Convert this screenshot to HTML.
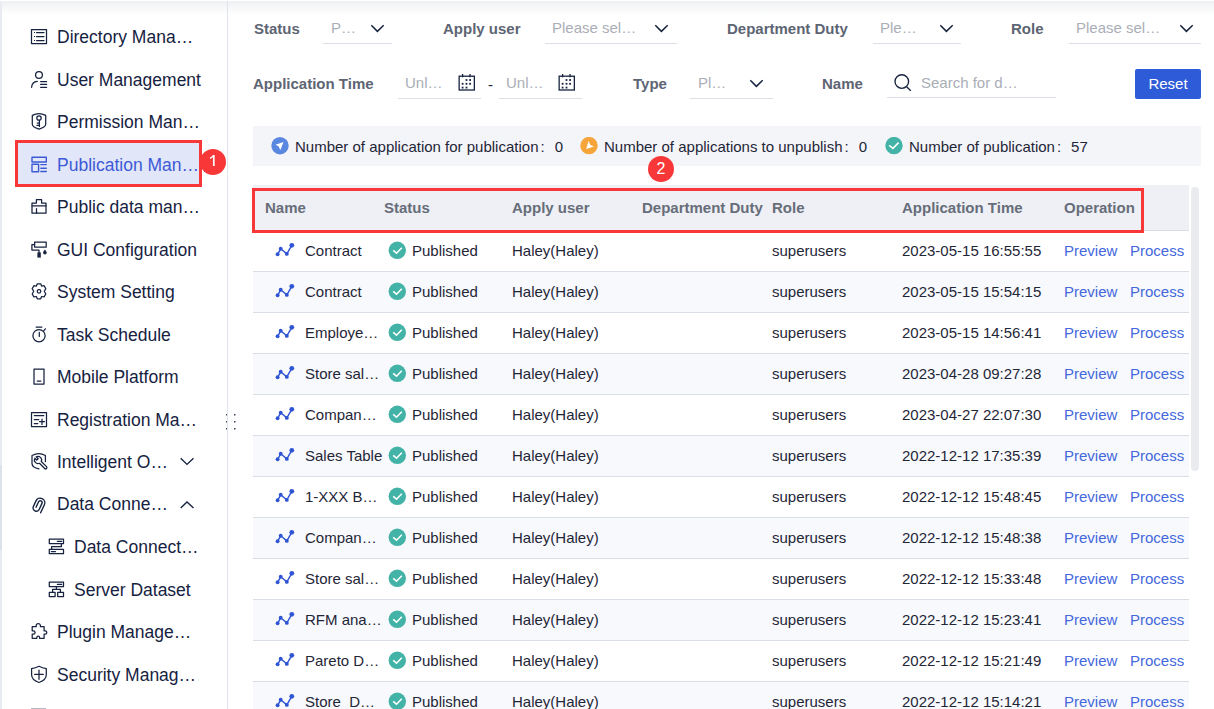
<!DOCTYPE html>
<html><head><meta charset="utf-8">
<style>
*{box-sizing:border-box;margin:0;padding:0}
html,body{width:1214px;height:709px;overflow:hidden;background:#fff;font-family:"Liberation Sans",sans-serif}
.abs{position:absolute}
#shadow{position:absolute;left:0;top:1px;width:1214px;height:14px;background:linear-gradient(#eef0f3,rgba(255,255,255,0));z-index:5}
#lb{position:absolute;left:0;top:1px;width:2px;height:708px;background:#e8ebf2;z-index:6}#lb2{position:absolute;left:0;top:465px;width:2px;height:85px;background:#dde1ea;z-index:7}
#side{position:absolute;left:0;top:0;width:228px;height:709px;background:#fff}#divl{position:absolute;left:227px;top:1px;width:1px;height:708px;background:#e1e4ea;z-index:6}
.si{position:absolute;left:57px;font-size:17.5px;line-height:20px;color:#16223f;white-space:nowrap}
.lbl{position:absolute;font-size:15px;font-weight:700;color:#5d6573;line-height:20px;white-space:nowrap}
.ph{position:absolute;font-size:15px;color:#a9aeb7;line-height:20px;white-space:nowrap}
.ul{position:absolute;height:1px;background:#dcdfe5}
.td{position:absolute;font-size:15px;line-height:20px;color:#1f2637;white-space:nowrap}
.th{position:absolute;font-size:15px;font-weight:700;line-height:20px;color:#676d79;white-space:nowrap}
.lk{color:#4468dc}
.row{position:absolute;left:253px;width:936px;height:41px;border-bottom:1px solid #dadee5}
</style></head><body>
<div id="shadow"></div><div id="divl"></div><div id="lb"></div><div id="lb2"></div>
<div id="side">
 <div class="abs" style="left:15px;top:140px;width:187px;height:47px;background:#e1e6f8;border:3px solid #f83838"></div>
 <div class="si" style="top:27px;left:57px">Directory Mana…</div>
 <div class="si" style="top:70px;left:57px">User Management</div>
 <div class="si" style="top:112px;left:57px">Permission Man…</div>
 <div class="si" style="top:155px;left:57px ;color:#3d5ad6">Publication Man…</div>
 <div class="si" style="top:197px;left:57px">Public data man…</div>
 <div class="si" style="top:240px;left:57px">GUI Configuration</div>
 <div class="si" style="top:282px;left:57px">System Setting</div>
 <div class="si" style="top:325px;left:57px">Task Schedule</div>
 <div class="si" style="top:367px;left:57px">Mobile Platform</div>
 <div class="si" style="top:410px;left:57px">Registration Ma…</div>
 <div class="si" style="top:452px;left:57px">Intelligent O…</div>
 <div class="si" style="top:494px;left:57px">Data Conne…</div>
 <div class="si" style="top:537px;left:74px">Data Connect…</div>
 <div class="si" style="top:580px;left:74px">Server Dataset</div>
 <div class="si" style="top:622px;left:57px">Plugin Manage…</div>
 <div class="si" style="top:665px;left:57px">Security Manag…</div>
 <svg class="abs" style="left:27px;top:25px" width="24" height="24" viewBox="0 0 24 24"><g fill="none" stroke="#16223f" stroke-width="1.25" stroke-linecap="round" stroke-linejoin="round" stroke-linecap="butt"><rect x="4.5" y="4.5" width="15" height="14"/><path d="M9.5 7.5H17M9.5 11.5H17M9.5 15.5H17"/></g><g fill="#16223f"><rect x="7" y="7" width="1" height="1"/><rect x="7" y="11" width="1" height="1"/><rect x="7" y="15" width="1" height="1"/></g></svg>
 <svg class="abs" style="left:27px;top:67px" width="24" height="24" viewBox="0 0 24 24"><g fill="none" stroke="#16223f" stroke-width="1.25" stroke-linecap="round" stroke-linejoin="round"><circle cx="12" cy="8" r="3.4"/><path d="M4.6 20.3C4.9 16.9 7.3 14.6 10.3 14.4"/><path d="M13.6 14.6H19.6M13.6 17.4H19.6M13.6 20.3H19.6"/></g></svg>
 <svg class="abs" style="left:27px;top:109px" width="24" height="24" viewBox="0 0 24 24"><g fill="none" stroke="#16223f" stroke-width="1.25" stroke-linecap="round" stroke-linejoin="round"><path d="M5.3 6.4C7.5 5.3 9.6 4.6 12 4.6S16.5 5.3 18.7 6.4V15.3C18.7 17.5 15 19.3 12 20.2C9 19.3 5.3 17.5 5.3 15.3Z"/><circle cx="12" cy="9" r="2.2"/><path d="M12.4 11.3V17.4M10.3 14.2H12.4M10 16.4H12.4"/></g></svg>
 <svg class="abs" style="left:27px;top:152px" width="24" height="24" viewBox="0 0 24 24"><g fill="none" stroke="#3d5ad6" stroke-width="1.4" stroke-linecap="round" stroke-linejoin="round"><rect x="5" y="5.2" width="14.3" height="4.8"/><rect x="5" y="12.3" width="6.6" height="7.4"/><path d="M13.8 12.6H19.3M13.8 16.3H19.3M13.8 19.5H19.3"/></g></svg>
 <svg class="abs" style="left:27px;top:195px" width="24" height="24" viewBox="0 0 24 24"><g fill="none" stroke="#16223f" stroke-width="1.25" stroke-linecap="round" stroke-linejoin="round"><path d="M5 8H9.4V4.6H14.6V8H19V18.2H5Z"/><path d="M5 10.8H19M9.5 13.5V18.2"/></g></svg>
 <svg class="abs" style="left:27px;top:237px" width="24" height="24" viewBox="0 0 24 24"><g fill="none" stroke="#16223f" stroke-width="1.25" stroke-linecap="round" stroke-linejoin="round"><rect x="7.6" y="5.1" width="11.6" height="5"/><path d="M7.6 7.5H4.9V13H12V15.6"/></g><rect x="10.4" y="15.4" width="3.4" height="5.2" fill="#16223f"/><path d="M17.9 12.6C18.9 14 19.7 14.9 19.7 15.8A1.8 1.8 0 0 1 16.1 15.8C16.1 14.9 16.9 14 17.9 12.6Z" fill="#16223f"/></svg>
 <svg class="abs" style="left:27px;top:280px" width="24" height="24" viewBox="0 0 24 24"><g fill="none" stroke="#16223f" stroke-width="1.25" stroke-linecap="round" stroke-linejoin="round"><path d="M10.3 3.8H13.7L14.6 6.1L17.1 5.7L18.8 8.6L17.3 11.3L18.8 14L17.1 16.9L14.6 16.5L13.7 18.8H10.3L9.4 16.5L6.9 16.9L5.2 14L6.7 11.3L5.2 8.6L6.9 5.7L9.4 6.1Z"/><circle cx="12" cy="11.3" r="1.8"/></g></svg>
 <svg class="abs" style="left:27px;top:322px" width="24" height="24" viewBox="0 0 24 24"><g fill="none" stroke="#16223f" stroke-width="1.25" stroke-linecap="round" stroke-linejoin="round"><path d="M9.2 5.2H14.8"/><circle cx="12" cy="13.7" r="6.1"/><path d="M12.3 10.4V14.4M16.7 8.8L18.4 6.8"/></g></svg>
 <svg class="abs" style="left:27px;top:365px" width="24" height="24" viewBox="0 0 24 24"><g fill="none" stroke="#16223f" stroke-width="1.25" stroke-linecap="round" stroke-linejoin="round" stroke-linecap="butt"><rect x="7" y="4" width="10" height="15"/><path d="M10.3 16.1H13.8"/></g></svg>
 <svg class="abs" style="left:27px;top:407px" width="24" height="24" viewBox="0 0 24 24"><g fill="none" stroke="#16223f" stroke-width="1.25" stroke-linecap="round" stroke-linejoin="round" stroke-linecap="butt"><rect x="4.5" y="5.5" width="15" height="14"/><path d="M7.3 8.5H16.8M7.3 12.5H11.8M7.3 16.5H10.8M12.5 14.5H17.5M15 12V17.5"/></g></svg>
 <svg class="abs" style="left:27px;top:449px" width="24" height="24" viewBox="0 0 24 24"><g fill="none" stroke="#16223f" stroke-width="1.25" stroke-linecap="round" stroke-linejoin="round"><path d="M18.4 12.6V6.5C16.3 5.3 14.2 4.6 11.8 4.6C9.4 4.6 7.2 5.3 5 6.5V14.6C5 17.2 8.2 19.2 11.9 19.9"/><path d="M9.265 7.845L11.14 9.72L9.72 11.14L7.845 9.265A3.6 3.6 0 0 0 12.45 14.29L17.68 19.52A1.3 1.3 0 0 0 19.52 17.68L14.29 12.45A3.6 3.6 0 0 0 9.265 7.845Z"/></g></svg>
 <svg class="abs" style="left:27px;top:492px" width="24" height="24" viewBox="0 0 24 24"><g fill="none" stroke="#16223f" stroke-width="1.25" stroke-linecap="round" stroke-linejoin="round" transform="translate(12.2 12.9) rotate(25) scale(1.12) translate(-12 -12.75)" stroke-width="1.12"><path d="M16.125 18.6V10.7A4.125 4.125 0 0 0 7.875 10.7V16.2A2.9 2.9 0 0 0 13.675 16.2V10.5A1.675 1.675 0 0 0 10.325 10.5V15.8"/></g></svg>
 <svg class="abs" style="left:44px;top:534px" width="24" height="24" viewBox="0 0 24 24"><g fill="none" stroke="#16223f" stroke-width="1.25" stroke-linecap="round" stroke-linejoin="round"><rect x="5.3" y="5.1" width="14.2" height="4.4"/><rect x="5.3" y="15.3" width="14.2" height="4.4"/><path d="M13.4 7.4H17.7M7.3 17.5H11.5M17.4 9.5V12.6H7.6V15.3"/></g></svg>
 <svg class="abs" style="left:44px;top:577px" width="24" height="24" viewBox="0 0 24 24"><g fill="none" stroke="#16223f" stroke-width="1.25" stroke-linecap="round" stroke-linejoin="round"><rect x="5.3" y="5.1" width="14.2" height="4.4"/><path d="M13.4 7.4H17.7M12.4 9.5V12.3"/><path d="M8.6 15.3V12.3H16.4V15.3"/><rect x="5.3" y="15.3" width="5.8" height="4.3"/><rect x="13.7" y="15.3" width="5.8" height="4.3"/></g></svg>
 <svg class="abs" style="left:27px;top:619px" width="24" height="24" viewBox="0 0 24 24"><g fill="none" stroke="#16223f" stroke-width="1.25" stroke-linecap="round" stroke-linejoin="round"><path d="M5.2 7.7H9.2V6.6A2.1 2.1 0 0 1 13.4 6.6V7.7H17.1V11.9H18.2A1.6 1.6 0 0 1 18.2 15.1H17.1V19.3H12.6V18.6A1.4 1.4 0 0 0 9.8 18.6V19.3H5.2V15.2H6.4A1.7 1.7 0 0 0 6.4 11.8H5.2Z"/></g></svg>
 <svg class="abs" style="left:27px;top:662px" width="24" height="24" viewBox="0 0 24 24"><g fill="none" stroke="#16223f" stroke-width="1.25" stroke-linecap="round" stroke-linejoin="round"><path d="M12 4.3C9.6 5.6 7.3 6.3 4.6 6.6V12.8C4.6 16.3 7.6 19 12 20.5C16.4 19 19.3 16.3 19.3 12.8V6.6C16.7 6.3 14.4 5.6 12 4.3Z"/><path d="M7.7 12.4H16.3M12 8V17.3"/></g></svg>
 <svg class="abs" style="left:176px;top:450px" width="24" height="24" viewBox="0 0 24 24"><path d="M4.7 8.3L11 14.4L17.5 8.3" fill="none" stroke="#16223f" stroke-width="1.4"/></svg>
 <svg class="abs" style="left:176px;top:493px" width="24" height="24" viewBox="0 0 24 24"><path d="M4.7 15.1L11 8.9L17.5 15.1" fill="none" stroke="#16223f" stroke-width="1.35"/></svg>
 <svg class="abs" style="left:226px;top:414px" width="12" height="17" viewBox="0 0 12 17"><rect x="0" y="0" width="1.5" height="1.5" fill="#3a4560"/><rect x="0" y="7" width="1.5" height="1.5" fill="#3a4560"/><rect x="0" y="14" width="1.5" height="1.5" fill="#3a4560"/><rect x="8" y="0" width="1.5" height="1.5" fill="#3a4560"/><rect x="8" y="7" width="1.5" height="1.5" fill="#3a4560"/><rect x="8" y="14" width="1.5" height="1.5" fill="#3a4560"/></svg>
 <div class="abs" style="left:200px;top:149px;width:26px;height:26px;border-radius:50%;background:#f83838"></div>
 <svg class="abs" style="left:200px;top:149px" width="26" height="26" viewBox="0 0 26 26"><path d="M13.8 6V17" stroke="#fff" stroke-width="1.7" fill="none"/><path d="M13.6 6.3C12.8 7.8 11.6 8.6 10 9.3" stroke="#fff" stroke-width="1.4" fill="none"/></svg>
 <div class="abs" style="left:31px;top:708px;width:15px;height:1px;background:#b5b9c4"></div>
</div>
<div class="lbl" style="left:254px;top:19px">Status</div>
<div class="ph" style="left:331px;top:18px">P…</div>
<div class="ul" style="left:323px;top:43px;width:69px"></div>
<div class="lbl" style="left:443px;top:19px">Apply user</div>
<div class="ph" style="left:552px;top:18px">Please sel…</div>
<div class="ul" style="left:545px;top:43px;width:132px"></div>
<div class="lbl" style="left:727px;top:19px">Department Duty</div>
<div class="ph" style="left:880px;top:18px">Ple…</div>
<div class="ul" style="left:873px;top:43px;width:88px"></div>
<div class="lbl" style="left:1011px;top:19px">Role</div>
<div class="ph" style="left:1076px;top:18px">Please sel…</div>
<div class="ul" style="left:1069px;top:43px;width:132px"></div>
<div class="lbl" style="left:253px;top:74px">Application Time</div>
<div class="ph" style="left:405px;top:73px">Unl…</div>
<div class="ul" style="left:398px;top:98px;width:83px"></div>
<div class="td" style="left:488px;top:75px;color:#1a2440">-</div>
<div class="ph" style="left:506px;top:73px">Unl…</div>
<div class="ul" style="left:499px;top:98px;width:83px"></div>
<div class="lbl" style="left:633px;top:74px">Type</div>
<div class="ph" style="left:698px;top:73px">Pl…</div>
<div class="ul" style="left:690px;top:98px;width:83px"></div>
<div class="lbl" style="left:822px;top:74px">Name</div>
<div class="ph" style="left:921px;top:73px">Search for d…</div>
<div class="ul" style="left:887px;top:97px;width:169px"></div>
<div class="abs" style="left:1135px;top:69px;width:66px;height:30px;background:#2e5bd8;border-radius:2px;color:#fff;font-size:15px;line-height:30px;text-align:center">Reset</div>
<svg class="abs" style="left:370px;top:24px" width="16" height="10" viewBox="0 0 16 10"><path d="M1.3 1.3L7.4 7.4L13.7 1.3" fill="none" stroke="#16223f" stroke-width="1.5"/></svg>
<svg class="abs" style="left:654px;top:24px" width="16" height="10" viewBox="0 0 16 10"><path d="M1.3 1.3L7.4 7.4L13.7 1.3" fill="none" stroke="#16223f" stroke-width="1.5"/></svg>
<svg class="abs" style="left:939px;top:24px" width="16" height="10" viewBox="0 0 16 10"><path d="M1.3 1.3L7.4 7.4L13.7 1.3" fill="none" stroke="#16223f" stroke-width="1.5"/></svg>
<svg class="abs" style="left:1179px;top:24px" width="16" height="10" viewBox="0 0 16 10"><path d="M1.3 1.3L7.4 7.4L13.7 1.3" fill="none" stroke="#16223f" stroke-width="1.5"/></svg>
<svg class="abs" style="left:749px;top:79px" width="16" height="10" viewBox="0 0 16 10"><path d="M1.3 1.3L7.4 7.4L13.7 1.3" fill="none" stroke="#16223f" stroke-width="1.5"/></svg>
<svg class="abs" style="left:458px;top:74px" width="19" height="18" viewBox="0 0 19 18"><g fill="none" stroke="#16223f" stroke-width="1.3"><rect x="1.15" y="2.2" width="15.2" height="13.8"/><path d="M4.6 0.1V3.2M12 0.1V3.2"/></g><rect x="7.6" y="5.1" width="1.8" height="1.8" fill="#16223f"/><rect x="11.2" y="5.1" width="1.8" height="1.8" fill="#16223f"/><rect x="3.6999999999999997" y="8.9" width="1.8" height="1.8" fill="#16223f"/><rect x="7.6" y="8.9" width="1.8" height="1.8" fill="#16223f"/><rect x="11.2" y="8.9" width="1.8" height="1.8" fill="#16223f"/><rect x="3.6999999999999997" y="12.7" width="1.8" height="1.8" fill="#16223f"/><rect x="7.6" y="12.7" width="1.8" height="1.8" fill="#16223f"/></svg>
<svg class="abs" style="left:558px;top:74px" width="19" height="18" viewBox="0 0 19 18"><g fill="none" stroke="#16223f" stroke-width="1.3"><rect x="1.15" y="2.2" width="15.2" height="13.8"/><path d="M4.6 0.1V3.2M12 0.1V3.2"/></g><rect x="7.6" y="5.1" width="1.8" height="1.8" fill="#16223f"/><rect x="11.2" y="5.1" width="1.8" height="1.8" fill="#16223f"/><rect x="3.6999999999999997" y="8.9" width="1.8" height="1.8" fill="#16223f"/><rect x="7.6" y="8.9" width="1.8" height="1.8" fill="#16223f"/><rect x="11.2" y="8.9" width="1.8" height="1.8" fill="#16223f"/><rect x="3.6999999999999997" y="12.7" width="1.8" height="1.8" fill="#16223f"/><rect x="7.6" y="12.7" width="1.8" height="1.8" fill="#16223f"/></svg>
<svg class="abs" style="left:892px;top:72px" width="21" height="21" viewBox="0 0 21 21"><g fill="none" stroke="#16223f" stroke-width="1.35" stroke-linecap="round"><circle cx="9.8" cy="9.5" r="6.8"/><path d="M14.9 15L18.5 18.4"/></g></svg>
<div class="abs" style="left:253px;top:126px;width:948px;height:40px;background:#f4f5f9"></div>
<div class="td" style="left:295px;top:137px">Number of application for publication<span style="margin-left:2px">:</span><span style="margin-left:10px">0</span></div>
<div class="td" style="left:604px;top:137px">Number of applications to unpublish<span style="margin-left:2px">:</span><span style="margin-left:10px">0</span></div>
<div class="td" style="left:909px;top:137px">Number of publication<span style="margin-left:2px">:</span><span style="margin-left:10px">57</span></div>
<svg class="abs" style="left:271px;top:137px" width="18" height="18" viewBox="0 0 18 18"><circle cx="9" cy="8.7" r="8.7" fill="#5a88e0"/><path d="M4.5 7.8L12.5 5.1L9.4 12.9L7.5 9.2Z" fill="#fff"/></svg>
<svg class="abs" style="left:580px;top:137px" width="18" height="18" viewBox="0 0 18 18"><circle cx="9" cy="8.6" r="8.7" fill="#f5a53a"/><path d="M8.6 4.1L10.4 7.9L14 9.5L6.2 11.9Z" fill="#fff"/></svg>
<svg class="abs" style="left:885px;top:137px" width="18" height="18" viewBox="0 0 18 18"><circle cx="9" cy="8.6" r="8.7" fill="#42b3a6"/><path d="M4.2 8.3L7.9 11.4L13.6 5.6" fill="none" stroke="#fff" stroke-width="1.6"/></svg>
<div class="abs" style="left:253px;top:185px;width:936px;height:46px;background:#eef0f5;border-bottom:1px solid #d9dce3"></div>
<div class="th" style="left:265px;top:198px">Name</div>
<div class="th" style="left:384px;top:198px">Status</div>
<div class="th" style="left:512px;top:198px">Apply user</div>
<div class="th" style="left:642px;top:198px">Department Duty</div>
<div class="th" style="left:772px;top:198px">Role</div>
<div class="th" style="left:902px;top:198px">Application Time</div>
<div class="th" style="left:1064px;top:198px">Operation</div>
<div class="row" style="top:231px;height:41px;background:#fff"></div>
<svg class="abs" style="left:274px;top:240px" width="22" height="18" viewBox="0 0 22 18"><g fill="#2f55d4"><circle cx="3.6" cy="14.3" r="1.95"/><circle cx="6.7" cy="8.8" r="1.95"/><circle cx="12.8" cy="13.9" r="1.95"/><circle cx="17.8" cy="5.3" r="2.4"/></g><path d="M3.6 14.3L6.7 8.8L12.8 13.9L17.8 5.3" fill="none" stroke="#2f55d4" stroke-width="1.4"/></svg>
<div class="td" style="left:305px;top:241px">Contract</div>
<svg class="abs" style="left:388px;top:241px" width="18" height="18" viewBox="0 0 18 18"><circle cx="9.3" cy="9.3" r="8.7" fill="#42b3a6"/><path d="M5.2 9.4L8.5 12.2L13.8 6.7" fill="none" stroke="#fff" stroke-width="1.6"/></svg>
<div class="td" style="left:412px;top:241px">Published</div>
<div class="td" style="left:512px;top:241px">Haley(Haley)</div>
<div class="td" style="left:772px;top:241px">superusers</div>
<div class="td" style="left:902px;top:241px">2023-05-15 16:55:55</div>
<div class="td lk" style="left:1064px;top:241px">Preview</div>
<div class="td lk" style="left:1130px;top:241px">Process</div>
<div class="row" style="top:272px;height:41px;background:#f7f9fc"></div>
<svg class="abs" style="left:274px;top:281px" width="22" height="18" viewBox="0 0 22 18"><g fill="#2f55d4"><circle cx="3.6" cy="14.3" r="1.95"/><circle cx="6.7" cy="8.8" r="1.95"/><circle cx="12.8" cy="13.9" r="1.95"/><circle cx="17.8" cy="5.3" r="2.4"/></g><path d="M3.6 14.3L6.7 8.8L12.8 13.9L17.8 5.3" fill="none" stroke="#2f55d4" stroke-width="1.4"/></svg>
<div class="td" style="left:305px;top:282px">Contract</div>
<svg class="abs" style="left:388px;top:282px" width="18" height="18" viewBox="0 0 18 18"><circle cx="9.3" cy="9.3" r="8.7" fill="#42b3a6"/><path d="M5.2 9.4L8.5 12.2L13.8 6.7" fill="none" stroke="#fff" stroke-width="1.6"/></svg>
<div class="td" style="left:412px;top:282px">Published</div>
<div class="td" style="left:512px;top:282px">Haley(Haley)</div>
<div class="td" style="left:772px;top:282px">superusers</div>
<div class="td" style="left:902px;top:282px">2023-05-15 15:54:15</div>
<div class="td lk" style="left:1064px;top:282px">Preview</div>
<div class="td lk" style="left:1130px;top:282px">Process</div>
<div class="row" style="top:313px;height:41px;background:#fff"></div>
<svg class="abs" style="left:274px;top:322px" width="22" height="18" viewBox="0 0 22 18"><g fill="#2f55d4"><circle cx="3.6" cy="14.3" r="1.95"/><circle cx="6.7" cy="8.8" r="1.95"/><circle cx="12.8" cy="13.9" r="1.95"/><circle cx="17.8" cy="5.3" r="2.4"/></g><path d="M3.6 14.3L6.7 8.8L12.8 13.9L17.8 5.3" fill="none" stroke="#2f55d4" stroke-width="1.4"/></svg>
<div class="td" style="left:305px;top:323px">Employe…</div>
<svg class="abs" style="left:388px;top:323px" width="18" height="18" viewBox="0 0 18 18"><circle cx="9.3" cy="9.3" r="8.7" fill="#42b3a6"/><path d="M5.2 9.4L8.5 12.2L13.8 6.7" fill="none" stroke="#fff" stroke-width="1.6"/></svg>
<div class="td" style="left:412px;top:323px">Published</div>
<div class="td" style="left:512px;top:323px">Haley(Haley)</div>
<div class="td" style="left:772px;top:323px">superusers</div>
<div class="td" style="left:902px;top:323px">2023-05-15 14:56:41</div>
<div class="td lk" style="left:1064px;top:323px">Preview</div>
<div class="td lk" style="left:1130px;top:323px">Process</div>
<div class="row" style="top:354px;height:41px;background:#f7f9fc"></div>
<svg class="abs" style="left:274px;top:363px" width="22" height="18" viewBox="0 0 22 18"><g fill="#2f55d4"><circle cx="3.6" cy="14.3" r="1.95"/><circle cx="6.7" cy="8.8" r="1.95"/><circle cx="12.8" cy="13.9" r="1.95"/><circle cx="17.8" cy="5.3" r="2.4"/></g><path d="M3.6 14.3L6.7 8.8L12.8 13.9L17.8 5.3" fill="none" stroke="#2f55d4" stroke-width="1.4"/></svg>
<div class="td" style="left:305px;top:364px">Store sal…</div>
<svg class="abs" style="left:388px;top:364px" width="18" height="18" viewBox="0 0 18 18"><circle cx="9.3" cy="9.3" r="8.7" fill="#42b3a6"/><path d="M5.2 9.4L8.5 12.2L13.8 6.7" fill="none" stroke="#fff" stroke-width="1.6"/></svg>
<div class="td" style="left:412px;top:364px">Published</div>
<div class="td" style="left:512px;top:364px">Haley(Haley)</div>
<div class="td" style="left:772px;top:364px">superusers</div>
<div class="td" style="left:902px;top:364px">2023-04-28 09:27:28</div>
<div class="td lk" style="left:1064px;top:364px">Preview</div>
<div class="td lk" style="left:1130px;top:364px">Process</div>
<div class="row" style="top:395px;height:41px;background:#fff"></div>
<svg class="abs" style="left:274px;top:404px" width="22" height="18" viewBox="0 0 22 18"><g fill="#2f55d4"><circle cx="3.6" cy="14.3" r="1.95"/><circle cx="6.7" cy="8.8" r="1.95"/><circle cx="12.8" cy="13.9" r="1.95"/><circle cx="17.8" cy="5.3" r="2.4"/></g><path d="M3.6 14.3L6.7 8.8L12.8 13.9L17.8 5.3" fill="none" stroke="#2f55d4" stroke-width="1.4"/></svg>
<div class="td" style="left:305px;top:405px">Compan…</div>
<svg class="abs" style="left:388px;top:405px" width="18" height="18" viewBox="0 0 18 18"><circle cx="9.3" cy="9.3" r="8.7" fill="#42b3a6"/><path d="M5.2 9.4L8.5 12.2L13.8 6.7" fill="none" stroke="#fff" stroke-width="1.6"/></svg>
<div class="td" style="left:412px;top:405px">Published</div>
<div class="td" style="left:512px;top:405px">Haley(Haley)</div>
<div class="td" style="left:772px;top:405px">superusers</div>
<div class="td" style="left:902px;top:405px">2023-04-27 22:07:30</div>
<div class="td lk" style="left:1064px;top:405px">Preview</div>
<div class="td lk" style="left:1130px;top:405px">Process</div>
<div class="row" style="top:436px;height:41px;background:#f7f9fc"></div>
<svg class="abs" style="left:274px;top:445px" width="22" height="18" viewBox="0 0 22 18"><g fill="#2f55d4"><circle cx="3.6" cy="14.3" r="1.95"/><circle cx="6.7" cy="8.8" r="1.95"/><circle cx="12.8" cy="13.9" r="1.95"/><circle cx="17.8" cy="5.3" r="2.4"/></g><path d="M3.6 14.3L6.7 8.8L12.8 13.9L17.8 5.3" fill="none" stroke="#2f55d4" stroke-width="1.4"/></svg>
<div class="td" style="left:305px;top:446px">Sales Table</div>
<svg class="abs" style="left:388px;top:446px" width="18" height="18" viewBox="0 0 18 18"><circle cx="9.3" cy="9.3" r="8.7" fill="#42b3a6"/><path d="M5.2 9.4L8.5 12.2L13.8 6.7" fill="none" stroke="#fff" stroke-width="1.6"/></svg>
<div class="td" style="left:412px;top:446px">Published</div>
<div class="td" style="left:512px;top:446px">Haley(Haley)</div>
<div class="td" style="left:772px;top:446px">superusers</div>
<div class="td" style="left:902px;top:446px">2022-12-12 17:35:39</div>
<div class="td lk" style="left:1064px;top:446px">Preview</div>
<div class="td lk" style="left:1130px;top:446px">Process</div>
<div class="row" style="top:477px;height:41px;background:#fff"></div>
<svg class="abs" style="left:274px;top:486px" width="22" height="18" viewBox="0 0 22 18"><g fill="#2f55d4"><circle cx="3.6" cy="14.3" r="1.95"/><circle cx="6.7" cy="8.8" r="1.95"/><circle cx="12.8" cy="13.9" r="1.95"/><circle cx="17.8" cy="5.3" r="2.4"/></g><path d="M3.6 14.3L6.7 8.8L12.8 13.9L17.8 5.3" fill="none" stroke="#2f55d4" stroke-width="1.4"/></svg>
<div class="td" style="left:305px;top:487px">1-XXX B…</div>
<svg class="abs" style="left:388px;top:487px" width="18" height="18" viewBox="0 0 18 18"><circle cx="9.3" cy="9.3" r="8.7" fill="#42b3a6"/><path d="M5.2 9.4L8.5 12.2L13.8 6.7" fill="none" stroke="#fff" stroke-width="1.6"/></svg>
<div class="td" style="left:412px;top:487px">Published</div>
<div class="td" style="left:512px;top:487px">Haley(Haley)</div>
<div class="td" style="left:772px;top:487px">superusers</div>
<div class="td" style="left:902px;top:487px">2022-12-12 15:48:45</div>
<div class="td lk" style="left:1064px;top:487px">Preview</div>
<div class="td lk" style="left:1130px;top:487px">Process</div>
<div class="row" style="top:518px;height:41px;background:#f7f9fc"></div>
<svg class="abs" style="left:274px;top:527px" width="22" height="18" viewBox="0 0 22 18"><g fill="#2f55d4"><circle cx="3.6" cy="14.3" r="1.95"/><circle cx="6.7" cy="8.8" r="1.95"/><circle cx="12.8" cy="13.9" r="1.95"/><circle cx="17.8" cy="5.3" r="2.4"/></g><path d="M3.6 14.3L6.7 8.8L12.8 13.9L17.8 5.3" fill="none" stroke="#2f55d4" stroke-width="1.4"/></svg>
<div class="td" style="left:305px;top:528px">Compan…</div>
<svg class="abs" style="left:388px;top:528px" width="18" height="18" viewBox="0 0 18 18"><circle cx="9.3" cy="9.3" r="8.7" fill="#42b3a6"/><path d="M5.2 9.4L8.5 12.2L13.8 6.7" fill="none" stroke="#fff" stroke-width="1.6"/></svg>
<div class="td" style="left:412px;top:528px">Published</div>
<div class="td" style="left:512px;top:528px">Haley(Haley)</div>
<div class="td" style="left:772px;top:528px">superusers</div>
<div class="td" style="left:902px;top:528px">2022-12-12 15:48:38</div>
<div class="td lk" style="left:1064px;top:528px">Preview</div>
<div class="td lk" style="left:1130px;top:528px">Process</div>
<div class="row" style="top:559px;height:41px;background:#fff"></div>
<svg class="abs" style="left:274px;top:568px" width="22" height="18" viewBox="0 0 22 18"><g fill="#2f55d4"><circle cx="3.6" cy="14.3" r="1.95"/><circle cx="6.7" cy="8.8" r="1.95"/><circle cx="12.8" cy="13.9" r="1.95"/><circle cx="17.8" cy="5.3" r="2.4"/></g><path d="M3.6 14.3L6.7 8.8L12.8 13.9L17.8 5.3" fill="none" stroke="#2f55d4" stroke-width="1.4"/></svg>
<div class="td" style="left:305px;top:569px">Store sal…</div>
<svg class="abs" style="left:388px;top:569px" width="18" height="18" viewBox="0 0 18 18"><circle cx="9.3" cy="9.3" r="8.7" fill="#42b3a6"/><path d="M5.2 9.4L8.5 12.2L13.8 6.7" fill="none" stroke="#fff" stroke-width="1.6"/></svg>
<div class="td" style="left:412px;top:569px">Published</div>
<div class="td" style="left:512px;top:569px">Haley(Haley)</div>
<div class="td" style="left:772px;top:569px">superusers</div>
<div class="td" style="left:902px;top:569px">2022-12-12 15:33:48</div>
<div class="td lk" style="left:1064px;top:569px">Preview</div>
<div class="td lk" style="left:1130px;top:569px">Process</div>
<div class="row" style="top:600px;height:41px;background:#f7f9fc"></div>
<svg class="abs" style="left:274px;top:609px" width="22" height="18" viewBox="0 0 22 18"><g fill="#2f55d4"><circle cx="3.6" cy="14.3" r="1.95"/><circle cx="6.7" cy="8.8" r="1.95"/><circle cx="12.8" cy="13.9" r="1.95"/><circle cx="17.8" cy="5.3" r="2.4"/></g><path d="M3.6 14.3L6.7 8.8L12.8 13.9L17.8 5.3" fill="none" stroke="#2f55d4" stroke-width="1.4"/></svg>
<div class="td" style="left:305px;top:610px">RFM ana…</div>
<svg class="abs" style="left:388px;top:610px" width="18" height="18" viewBox="0 0 18 18"><circle cx="9.3" cy="9.3" r="8.7" fill="#42b3a6"/><path d="M5.2 9.4L8.5 12.2L13.8 6.7" fill="none" stroke="#fff" stroke-width="1.6"/></svg>
<div class="td" style="left:412px;top:610px">Published</div>
<div class="td" style="left:512px;top:610px">Haley(Haley)</div>
<div class="td" style="left:772px;top:610px">superusers</div>
<div class="td" style="left:902px;top:610px">2022-12-12 15:23:41</div>
<div class="td lk" style="left:1064px;top:610px">Preview</div>
<div class="td lk" style="left:1130px;top:610px">Process</div>
<div class="row" style="top:641px;height:41px;background:#fff"></div>
<svg class="abs" style="left:274px;top:650px" width="22" height="18" viewBox="0 0 22 18"><g fill="#2f55d4"><circle cx="3.6" cy="14.3" r="1.95"/><circle cx="6.7" cy="8.8" r="1.95"/><circle cx="12.8" cy="13.9" r="1.95"/><circle cx="17.8" cy="5.3" r="2.4"/></g><path d="M3.6 14.3L6.7 8.8L12.8 13.9L17.8 5.3" fill="none" stroke="#2f55d4" stroke-width="1.4"/></svg>
<div class="td" style="left:305px;top:651px">Pareto D…</div>
<svg class="abs" style="left:388px;top:651px" width="18" height="18" viewBox="0 0 18 18"><circle cx="9.3" cy="9.3" r="8.7" fill="#42b3a6"/><path d="M5.2 9.4L8.5 12.2L13.8 6.7" fill="none" stroke="#fff" stroke-width="1.6"/></svg>
<div class="td" style="left:412px;top:651px">Published</div>
<div class="td" style="left:512px;top:651px">Haley(Haley)</div>
<div class="td" style="left:772px;top:651px">superusers</div>
<div class="td" style="left:902px;top:651px">2022-12-12 15:21:49</div>
<div class="td lk" style="left:1064px;top:651px">Preview</div>
<div class="td lk" style="left:1130px;top:651px">Process</div>
<div class="row" style="top:682px;height:41px;background:#f7f9fc"></div>
<svg class="abs" style="left:274px;top:691px" width="22" height="18" viewBox="0 0 22 18"><g fill="#2f55d4"><circle cx="3.6" cy="14.3" r="1.95"/><circle cx="6.7" cy="8.8" r="1.95"/><circle cx="12.8" cy="13.9" r="1.95"/><circle cx="17.8" cy="5.3" r="2.4"/></g><path d="M3.6 14.3L6.7 8.8L12.8 13.9L17.8 5.3" fill="none" stroke="#2f55d4" stroke-width="1.4"/></svg>
<div class="td" style="left:305px;top:692px">Store&nbsp; D…</div>
<svg class="abs" style="left:388px;top:692px" width="18" height="18" viewBox="0 0 18 18"><circle cx="9.3" cy="9.3" r="8.7" fill="#42b3a6"/><path d="M5.2 9.4L8.5 12.2L13.8 6.7" fill="none" stroke="#fff" stroke-width="1.6"/></svg>
<div class="td" style="left:412px;top:692px">Published</div>
<div class="td" style="left:512px;top:692px">Haley(Haley)</div>
<div class="td" style="left:772px;top:692px">superusers</div>
<div class="td" style="left:902px;top:692px">2022-12-12 15:14:21</div>
<div class="td lk" style="left:1064px;top:692px">Preview</div>
<div class="td lk" style="left:1130px;top:692px">Process</div>
<div class="abs" style="left:252px;top:188px;width:892px;height:45px;border:3px solid #f83838"></div>
<div class="abs" style="left:648px;top:156px;width:26px;height:26px;border-radius:50%;background:#f83838;color:#fff;font-size:16px;line-height:25px;text-align:center">2</div>
<div class="abs" style="left:1191px;top:187px;width:8px;height:284px;border-radius:4px;background:#e9ebef"></div>
</body></html>
